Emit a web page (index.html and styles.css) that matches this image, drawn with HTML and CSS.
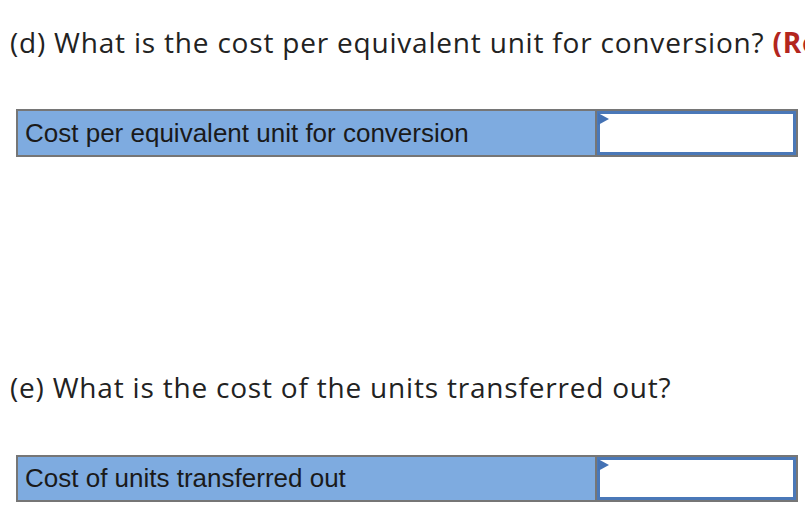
FILE: index.html
```html
<!DOCTYPE html>
<html>
<head>
<meta charset="utf-8">
<link rel="stylesheet" href="styles.css">
</head>
<body>
<div class="page">
  <section class="question q-d">
    <p class="prompt">(d) What is the cost per equivalent unit for conversion? <span class="req">(Round your answer to 2 decimal places.)</span></p>
    <div class="answer-row">
      <div class="label">Cost per equivalent unit for conversion</div>
      <div class="input-cell"><input type="text" class="field" aria-label="Cost per equivalent unit for conversion"><span class="flag"></span></div>
    </div>
  </section>
  <section class="question q-e">
    <p class="prompt">(e) What is the cost of the units transferred out?</p>
    <div class="answer-row">
      <div class="label">Cost of units transferred out</div>
      <div class="input-cell"><input type="text" class="field" aria-label="Cost of units transferred out"><span class="flag"></span></div>
    </div>
  </section>
</div>
</body>
</html>
```

FILE: styles.css
```css
html, body {
  margin: 0;
  padding: 0;
  background: #ffffff;
  overflow: hidden;
}

.page {
  width: 805px;
  padding: 26px 0 0 10px;
  box-sizing: border-box;
  overflow: hidden;
}

.prompt {
  margin: 0;
  font-family: "Open Sans", "Lato", sans-serif;
  font-size: 28px;
  line-height: 32px;
  letter-spacing: 0.8px;
  color: #222222;
  white-space: nowrap;
}

.req {
  color: #b3261e;
  font-weight: 700;
}

.answer-row {
  display: flex;
  margin: 51px 0 0 6px;
  width: 782px;
  height: 48px;
  border: 2px solid #767676;
  box-sizing: border-box;
}

.q-e {
  margin-top: 214px;
}

.q-e .answer-row {
  height: 47px;
  margin-top: 52px;
}

.label {
  flex: 0 0 579px;
  background: #7eabe0;
  font-family: "Liberation Sans", Arial, sans-serif;
  font-size: 26px;
  color: #1a1a1a;
  padding-left: 7px;
  display: flex;
  align-items: center;
  box-sizing: border-box;
  border-right: 2px solid #767676;
}

.input-cell {
  position: relative;
  flex: 1;
  display: flex;
}

.field {
  flex: 1;
  margin: 0;
  border: 3px solid #4a78b8;
  background: #ffffff;
  padding: 0;
  outline: none;
}

.flag {
  position: absolute;
  left: 1px;
  top: 2px;
  width: 0;
  height: 0;
  border-top: 6px solid transparent;
  border-bottom: 6px solid transparent;
  border-left: 11px solid #4472b4;
}
```
